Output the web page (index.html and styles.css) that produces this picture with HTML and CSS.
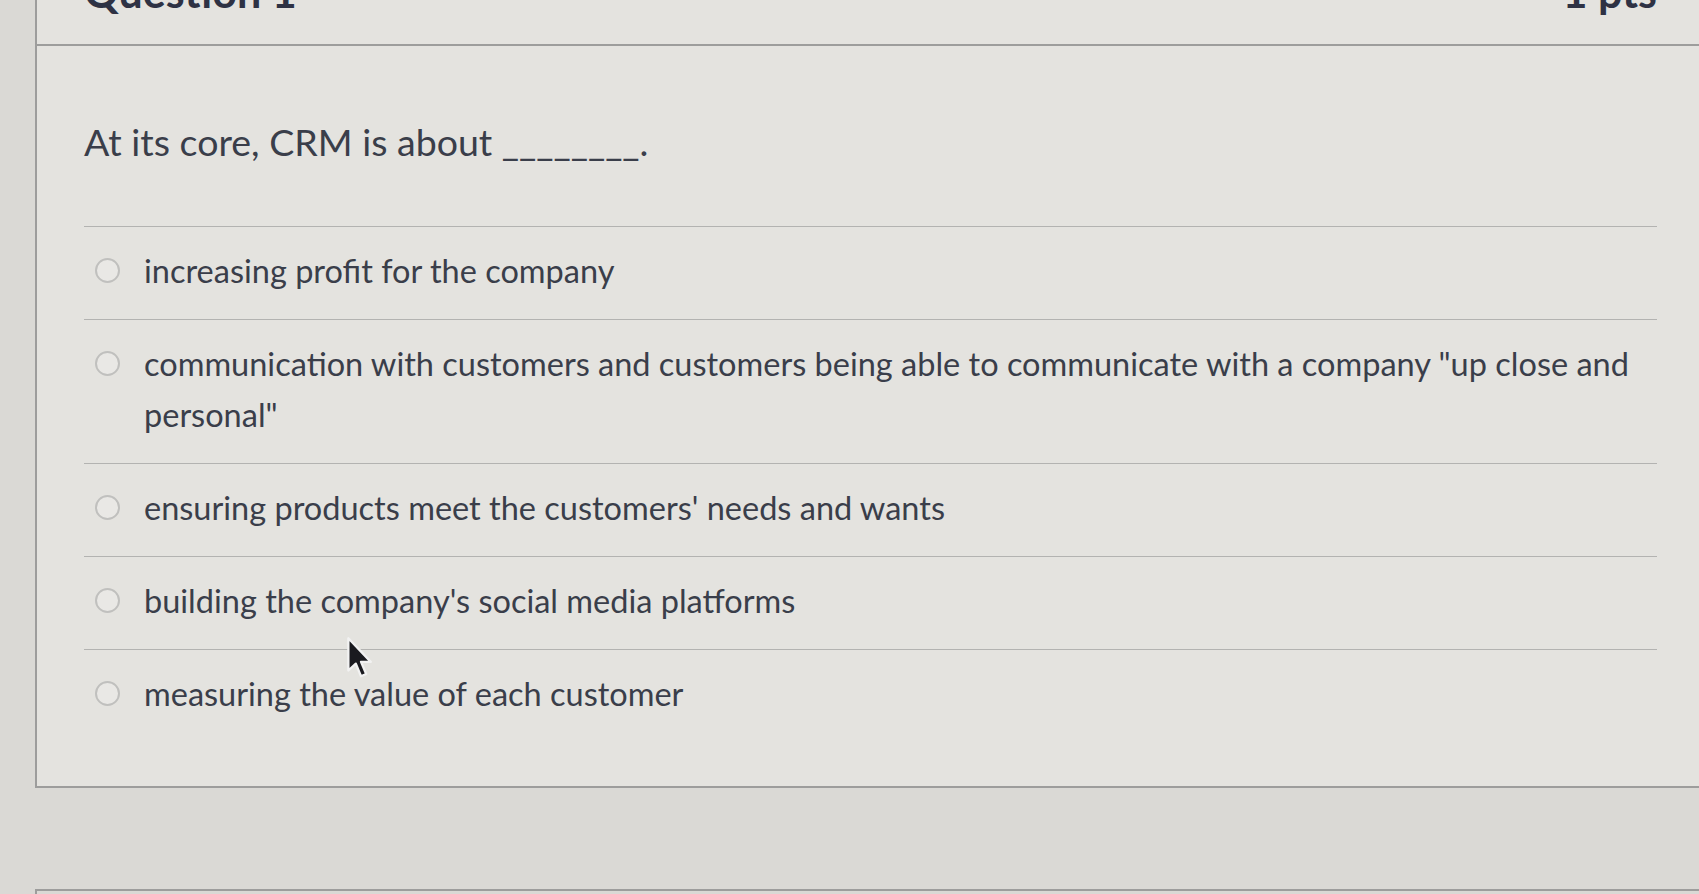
FILE: index.html
```html
<!DOCTYPE html>
<html lang="en">
<head>
<meta charset="utf-8">
<title>Question 1</title>
<link rel="stylesheet" href="styles.css">
</head>
<body>
<div class="page">
  <div class="card">
    <div class="card-header">
      <h2 class="q-title">Question 1</h2>
      <span class="q-points">1 pts</span>
    </div>
    <div class="card-body">
      <p class="q-text">At its core, CRM is about ________.</p>
      <ul class="answers">
        <li class="answer"><span class="radio"></span><span class="label">increasing profit for the company</span></li>
        <li class="answer"><span class="radio"></span><span class="label">communication with customers and customers being able to communicate with a company "up close and personal"</span></li>
        <li class="answer"><span class="radio"></span><span class="label">ensuring products meet the customers' needs and wants</span></li>
        <li class="answer"><span class="radio"></span><span class="label">building the company's social media platforms</span></li>
        <li class="answer"><span class="radio"></span><span class="label">measuring the value of each customer</span></li>
      </ul>
    </div>
  </div>
  <div class="next-card"></div>
</div>
<svg class="cursor" width="30" height="46" viewBox="0 0 26 40" aria-hidden="true">
  <path d="M2 2 L2 30 L8.5 24 L13 35 L17.5 33 L13 22.5 L21.5 22.5 Z" fill="#1a1a1f" stroke="#f2f2f2" stroke-width="2" stroke-linejoin="round"/>
</svg>
</body>
</html>
```

FILE: styles.css
```css
html, body {
  margin: 0;
  padding: 0;
}
body {
  background: #dad9d5;
  font-family: Lato, "Open Sans", sans-serif;
  color: #3a3e4a;
  overflow: hidden;
  height: 894px;
  position: relative;
}
.page {
  padding-left: 35px;
}
.card {
  background: #e4e3df;
  border-left: 2px solid #9d9d9c;
  border-bottom: 2px solid #9d9d9c;
  height: 786px;
}
.card-header {
  display: flex;
  justify-content: space-between;
  align-items: flex-end;
  height: 46px;
  box-sizing: border-box;
  padding: 0 42px 31px 47px;
  border-bottom: 2px solid #9d9d9c;
  color: #2e3244;
}
.q-title {
  margin: 0;
  font-size: 43px;
  font-weight: 700;
  line-height: 1;
}
.q-points {
  font-size: 43px;
  font-weight: 700;
  line-height: 1;
}
.card-body {
  padding: 0 42px 0 47px;
}
.q-text {
  margin: 0;
  padding: 70px 0 59px;
  font-size: 37.5px;
  line-height: 51px;
}
.answers {
  list-style: none;
  margin: 0;
  padding: 0;
  border-top: 1px solid #b3b3b1;
}
.answer {
  display: flex;
  align-items: flex-start;
  padding: 18px 0 23px 11px;
  font-size: 32.5px;
  line-height: 51px;
  border-bottom: 1px solid #b3b3b1;
}
.answer:last-child {
  border-bottom: none;
}
.radio {
  flex: none;
  width: 21px;
  height: 21px;
  margin-top: 13px;
  margin-right: 24px;
  border: 2px solid #c0c0be;
  border-radius: 50%;
  background: #e9e8e5;
}
.label {
  flex: 1;
}
.next-card {
  margin-top: 101px;
  border-top: 2px solid #9d9d9c;
  border-left: 2px solid #9d9d9c;
  height: 20px;
}
.cursor {
  position: absolute;
  left: 346px;
  top: 636px;
}
```
